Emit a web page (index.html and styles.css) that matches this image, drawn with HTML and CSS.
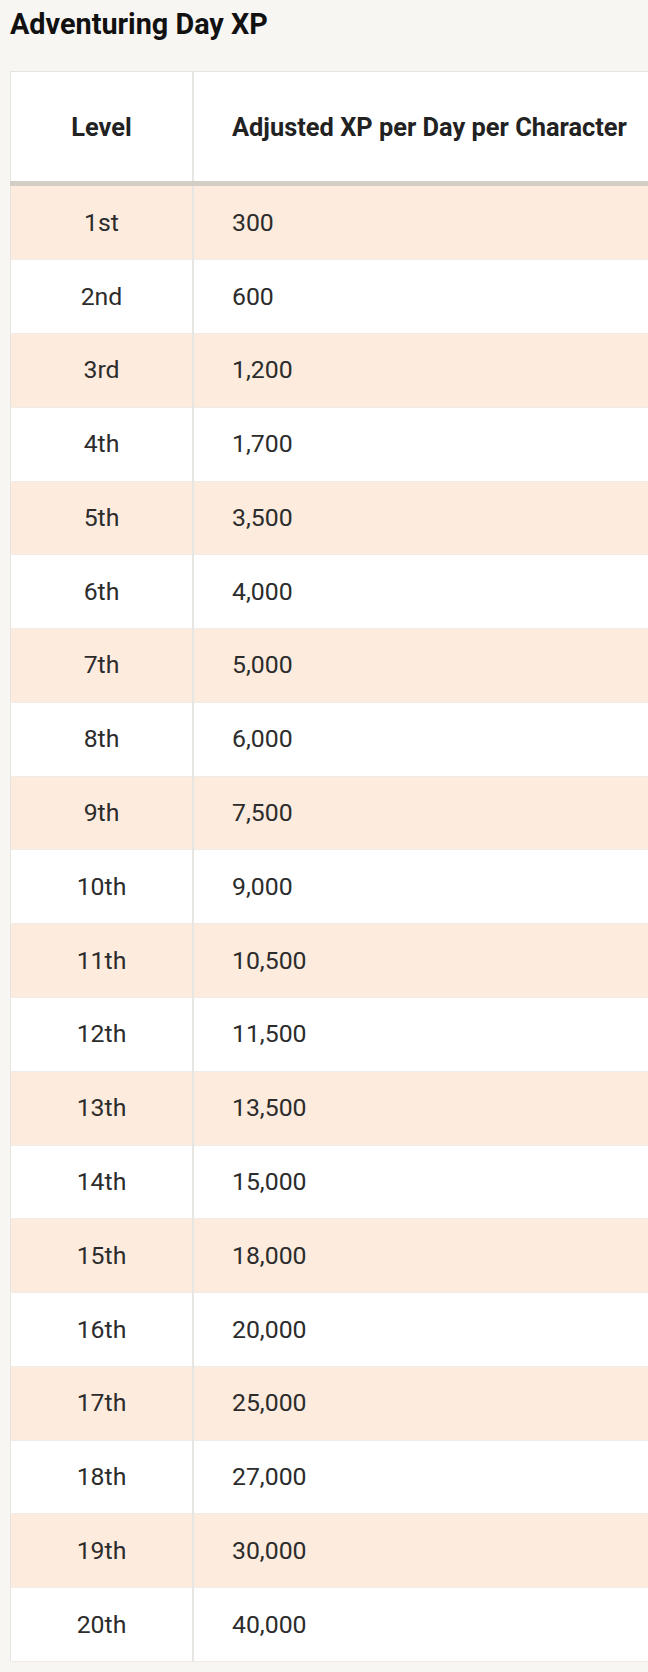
FILE: index.html
```html
<!DOCTYPE html>
<html lang="en">
<head>
<meta charset="utf-8">
<title>Adventuring Day XP</title>
<link rel="stylesheet" href="styles.css">
</head>
<body>
<div class="page">
  <h2 class="title">Adventuring Day XP</h2>
  <div class="table-wrap">
    <table class="xp-table">
      <thead>
        <tr><th class="col-level">Level</th><th class="col-xp">Adjusted XP per Day per Character</th></tr>
      </thead>
      <tbody>
        <tr><td class="col-level">1st</td><td class="col-xp">300</td></tr>
        <tr><td class="col-level">2nd</td><td class="col-xp">600</td></tr>
        <tr><td class="col-level">3rd</td><td class="col-xp">1,200</td></tr>
        <tr><td class="col-level">4th</td><td class="col-xp">1,700</td></tr>
        <tr><td class="col-level">5th</td><td class="col-xp">3,500</td></tr>
        <tr><td class="col-level">6th</td><td class="col-xp">4,000</td></tr>
        <tr><td class="col-level">7th</td><td class="col-xp">5,000</td></tr>
        <tr><td class="col-level">8th</td><td class="col-xp">6,000</td></tr>
        <tr><td class="col-level">9th</td><td class="col-xp">7,500</td></tr>
        <tr><td class="col-level">10th</td><td class="col-xp">9,000</td></tr>
        <tr><td class="col-level">11th</td><td class="col-xp">10,500</td></tr>
        <tr><td class="col-level">12th</td><td class="col-xp">11,500</td></tr>
        <tr><td class="col-level">13th</td><td class="col-xp">13,500</td></tr>
        <tr><td class="col-level">14th</td><td class="col-xp">15,000</td></tr>
        <tr><td class="col-level">15th</td><td class="col-xp">18,000</td></tr>
        <tr><td class="col-level">16th</td><td class="col-xp">20,000</td></tr>
        <tr><td class="col-level">17th</td><td class="col-xp">25,000</td></tr>
        <tr><td class="col-level">18th</td><td class="col-xp">27,000</td></tr>
        <tr><td class="col-level">19th</td><td class="col-xp">30,000</td></tr>
        <tr><td class="col-level">20th</td><td class="col-xp">40,000</td></tr>
      </tbody>
    </table>
  </div>
</div>
</body>
</html>
```

FILE: styles.css
```css
html, body {
  margin: 0;
  padding: 0;
  background: #f8f6f3;
  overflow: hidden;
}

.page {
  font-family: Roboto, "Liberation Sans", Arial, sans-serif;
  color: #262626;
  padding: 7.4px 0 0 10px;
}

.title {
  margin: 0 0 30px 0;
  font-size: 28.8px;
  line-height: 34px;
  font-weight: 700;
  color: #111111;
}

.table-wrap {
  overflow: hidden;
}

.xp-table {
  border-collapse: collapse;
  width: 700px;
  background: #ffffff;
  border: 1px solid #e6e4e1;
  font-size: 24.8px;
}

.xp-table th {
  font-size: 25.4px;
  font-weight: 700;
  line-height: 36px;
  padding: 36.5px 0;
  color: #222222;
  border-bottom: 5px solid #d3cdc6;
}

.xp-table td {
  font-weight: 400;
  line-height: 36px;
  padding: 18.4px 0;
  border-bottom: 1px solid #f0ebe6;
  color: #2c2c2c;
}

.xp-table tbody tr:nth-child(odd) {
  background: #fdebde;
}

.xp-table .col-level {
  width: 181px;
  text-align: center;
  border-right: 2px solid #e8e6e3;
}

.xp-table .col-xp {
  text-align: left;
  padding-left: 38px;
}
```
